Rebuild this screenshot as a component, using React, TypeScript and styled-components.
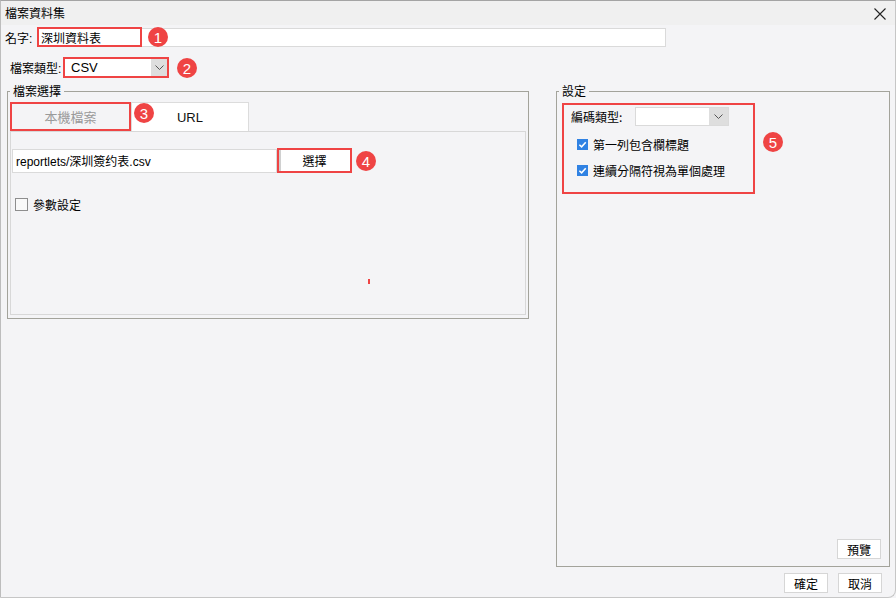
import styled, { createGlobalStyle } from "styled-components";

const GlobalStyle = createGlobalStyle`
  html, body {
    margin: 0;
    padding: 0;
    background: #f4f4f6;
  }
  body {
    font-family: "Liberation Sans", "Noto Sans CJK TC", sans-serif;
    font-size: 12px;
    color: #000;
  }
  * { box-sizing: border-box; }
`;

const RED = "#ef4444";

function Chevron() {
  return (
    <svg width="9" height="5" viewBox="0 0 9 5">
      <path d="M0.5 0.5 L4.5 4.5 L8.5 0.5" fill="none" stroke="#555" strokeWidth="1" />
    </svg>
  );
}

function Tick() {
  return (
    <svg width="9" height="9" viewBox="0 0 10 10">
      <path d="M1.5 5.2 L4 7.6 L8.6 2.4" fill="none" stroke="#fff" strokeWidth="1.7" />
    </svg>
  );
}

type CheckProps = { checked?: boolean; label: string };

function Check({ checked, label }: CheckProps) {
  return (
    <CheckRow>
      <CheckBox $checked={checked}>{checked && <Tick />}</CheckBox>
      <span>{label}</span>
    </CheckRow>
  );
}

export default function App() {
  return (
    <Window>
      <GlobalStyle />
      <TitleBar>
        <span>檔案資料集</span>
        <CloseButton>
          <svg width="12" height="12" viewBox="0 0 12 12">
            <path d="M0.5 0.5 L11.5 11.5 M11.5 0.5 L0.5 11.5" stroke="#222" strokeWidth="1.1" />
          </svg>
        </CloseButton>
      </TitleBar>

      <Body>
        <NameRow>
          <NameLabel>名字:</NameLabel>
          <Anchor>
            <TextInput $width={629} $height={19}>深圳資料表</TextInput>
            <Marker $left={0} $top={-1} $width={105} $height={20} />
            <Badge $left={111} $top={-1}>1</Badge>
          </Anchor>
        </NameRow>

        <TypeRow>
          <TypeLabel>檔案類型:</TypeLabel>
          <Select $width={106} $height={21} $marked>
            <SelectValue>CSV</SelectValue>
            <SelectArrow $width={16}>
              <Chevron />
            </SelectArrow>
          </Select>
          <InlineBadge $gap={8}>2</InlineBadge>
        </TypeRow>

        <Main>
          <Group $width={522} $height={235} $left={6}>
            <Legend>檔案選擇</Legend>
            <Tabs>
              <Anchor>
                <Tab $active>本機檔案</Tab>
                <Badge $left={124} $top={1}>3</Badge>
              </Anchor>
              <Tab>URL</Tab>
            </Tabs>
            <TabPanel>
              <FileRow>
                <TextInput $width={265} $height={24}>reportlets/深圳簽约表.csv</TextInput>
                <PickButton>選擇</PickButton>
                <InlineBadge $gap={4}>4</InlineBadge>
              </FileRow>
              <ParamRow>
                <Check label="參數設定" />
              </ParamRow>
              <Stray />
            </TabPanel>
          </Group>

          <Group $width={334} $height={483} $left={27}>
            <Legend>設定</Legend>
            <SettingsRow>
              <SettingsBox>
                <EncodingRow>
                  <EncodingLabel>編碼類型:</EncodingLabel>
                  <Select $width={94} $height={19}>
                    <SelectValue />
                    <SelectArrow $width={19}>
                      <Chevron />
                    </SelectArrow>
                  </Select>
                </EncodingRow>
                <Options>
                  <Check checked label="第一列包含欄標題" />
                  <Check checked label="連續分隔符視為單個處理" />
                </Options>
              </SettingsBox>
              <SideBadge>5</SideBadge>
            </SettingsRow>
            <PreviewButton>預覽</PreviewButton>
          </Group>
        </Main>

        <Footer>
          <Button>確定</Button>
          <Button>取消</Button>
        </Footer>
      </Body>
    </Window>
  );
}

const Window = styled.div`
  width: 896px;
  height: 598px;
  display: flex;
  flex-direction: column;
  background: #f4f4f6;
  border-top: 1px solid #a4a4a4;
  border-left: 1px solid #bdbdbd;
  border-right: 1px solid #c6c6c6;
  border-bottom: 1px solid #c6c6c6;
  border-bottom-right-radius: 8px;
  overflow: hidden;
`;

const TitleBar = styled.div`
  height: 24px;
  display: flex;
  align-items: center;
  justify-content: space-between;
  padding: 0 9px 0 4px;
  background: #f0f0f0;
  font-family: "Noto Sans CJK TC", sans-serif;
  line-height: 14px;
`;

const CloseButton = styled.div`
  display: flex;
  align-items: center;
  margin-top: 2px;
`;

const Body = styled.div`
  flex: 1;
  display: flex;
  flex-direction: column;
`;

const NameRow = styled.div`
  display: flex;
  align-items: center;
  height: 19px;
  margin-top: 3px;
  padding-left: 4px;
`;

const NameLabel = styled.span`
  width: 32px;
`;

const Anchor = styled.div`
  position: relative;
  display: flex;
`;

const TextInput = styled.div<{ $width: number; $height: number }>`
  width: ${(p) => p.$width}px;
  height: ${(p) => p.$height}px;
  display: flex;
  align-items: center;
  padding-left: 3px;
  background: #fff;
  border: 1px solid #dadada;
  white-space: nowrap;
`;

const Marker = styled.div<{ $left: number; $top: number; $width: number; $height: number }>`
  position: absolute;
  left: ${(p) => p.$left}px;
  top: ${(p) => p.$top}px;
  width: ${(p) => p.$width}px;
  height: ${(p) => p.$height}px;
  border: 2px solid ${RED};
  pointer-events: none;
`;

const BadgeBase = styled.div`
  width: 20px;
  height: 20px;
  border-radius: 50%;
  background: ${RED};
  color: #fff;
  font-family: "Liberation Sans", sans-serif;
  font-size: 15px;
  display: flex;
  align-items: center;
  justify-content: center;
  flex-shrink: 0;
`;

const Badge = styled(BadgeBase)<{ $left: number; $top: number }>`
  position: absolute;
  left: ${(p) => p.$left}px;
  top: ${(p) => p.$top}px;
`;

const InlineBadge = styled(BadgeBase)<{ $gap: number }>`
  margin-left: ${(p) => p.$gap}px;
  margin-top: 1px;
`;

const TypeRow = styled.div`
  display: flex;
  align-items: center;
  margin-top: 10px;
  padding-left: 9px;
`;

const TypeLabel = styled.span`
  width: 53px;
`;

const Select = styled.div<{ $width: number; $height: number; $marked?: boolean }>`
  width: ${(p) => p.$width}px;
  height: ${(p) => p.$height}px;
  display: flex;
  background: #fff;
  border: ${(p) => (p.$marked ? `2px solid ${RED}` : "1px solid #dadada")};
`;

const SelectValue = styled.div`
  flex: 1;
  display: flex;
  align-items: center;
  padding-left: 6px;
  font-size: 13px;
`;

const SelectArrow = styled.div<{ $width: number }>`
  width: ${(p) => p.$width}px;
  display: flex;
  align-items: center;
  justify-content: center;
  background: #dedede;
`;

const Main = styled.div`
  display: flex;
  align-items: flex-start;
  margin-top: 6px;
`;

const Group = styled.fieldset<{ $width: number; $height: number; $left: number }>`
  width: ${(p) => p.$width}px;
  height: ${(p) => p.$height}px;
  margin: 0 0 0 ${(p) => p.$left}px;
  padding: 0 2px 2px 2px;
  border: 1px solid #a3a39b;
  display: flex;
  flex-direction: column;
  min-width: 0;
`;

const Legend = styled.legend`
  padding: 0 3px;
  margin-left: 0;
  line-height: 14px;
  font-family: "Noto Sans CJK TC", sans-serif;
`;

const Tabs = styled.div`
  display: flex;
  margin-top: 4px;
`;

const Tab = styled.div<{ $active?: boolean }>`
  width: ${(p) => (p.$active ? 121 : 118)}px;
  height: 29px;
  display: flex;
  align-items: center;
  justify-content: center;
  font-size: 13px;
  color: ${(p) => (p.$active ? "#9a9a9a" : "#111")};
  background: ${(p) => (p.$active ? "#f4f4f6" : "#fff")};
  border: ${(p) => (p.$active ? `2px solid ${RED}` : "1px solid #dcdcdc")};
  border-bottom-width: ${(p) => (p.$active ? 2 : 0)}px;
`;

const TabPanel = styled.div`
  position: relative;
  width: 516px;
  height: 184px;
  border: 1px solid #d8d8d8;
  display: flex;
  flex-direction: column;
`;

const FileRow = styled.div`
  display: flex;
  align-items: center;
  margin: 16px 0 0 1px;
`;

const PickButton = styled.div`
  width: 75px;
  height: 25px;
  display: flex;
  align-items: center;
  justify-content: center;
  background: #fff;
  border: 2px solid ${RED};
  box-shadow: inset 2px 0 0 #d0d0d0;
  font-family: "Noto Sans CJK TC", sans-serif;
`;

const ParamRow = styled.div`
  margin: 24px 0 0 4px;
`;

const Stray = styled.span`
  position: absolute;
  left: 357px;
  top: 147px;
  width: 2px;
  height: 5px;
  background: ${RED};
`;

const CheckRow = styled.div`
  display: flex;
  align-items: center;
  gap: 5px;
  height: 14px;
  font-family: "Noto Sans CJK TC", sans-serif;
`;

const CheckBox = styled.div<{ $checked?: boolean }>`
  width: ${(p) => (p.$checked ? 11 : 13)}px;
  height: ${(p) => (p.$checked ? 11 : 13)}px;
  display: flex;
  align-items: center;
  justify-content: center;
  background: ${(p) => (p.$checked ? "#3082e3" : "#f9f9f9")};
  border: ${(p) => (p.$checked ? "none" : "1px solid #8e8e8e")};
`;

const SettingsRow = styled.div`
  display: flex;
  align-items: flex-start;
  margin: 5px 0 0 3px;
`;

const SettingsBox = styled.div`
  width: 193px;
  height: 91px;
  border: 2px solid ${RED};
  padding: 2px 0 0 7px;
  display: flex;
  flex-direction: column;
`;

const EncodingRow = styled.div`
  display: flex;
  align-items: center;
`;

const EncodingLabel = styled.span`
  width: 64px;
  font-family: "Noto Sans CJK TC", sans-serif;
`;

const Options = styled.div`
  display: flex;
  flex-direction: column;
  gap: 12px;
  margin: 11px 0 0 6px;
`;

const SideBadge = styled(BadgeBase)`
  margin: 29px 0 0 8px;
`;

const Button = styled.div`
  width: 44px;
  height: 20px;
  display: flex;
  align-items: center;
  justify-content: center;
  background: #fff;
  border: 1px solid #d6d6d6;
  font-family: "Noto Sans CJK TC", sans-serif;
`;

const PreviewButton = styled(Button)`
  margin: auto 6px 5px 0;
  align-self: flex-end;
`;

const Footer = styled.div`
  display: flex;
  justify-content: flex-end;
  gap: 10px;
  margin-top: 6px;
  padding-right: 13px;
`;
